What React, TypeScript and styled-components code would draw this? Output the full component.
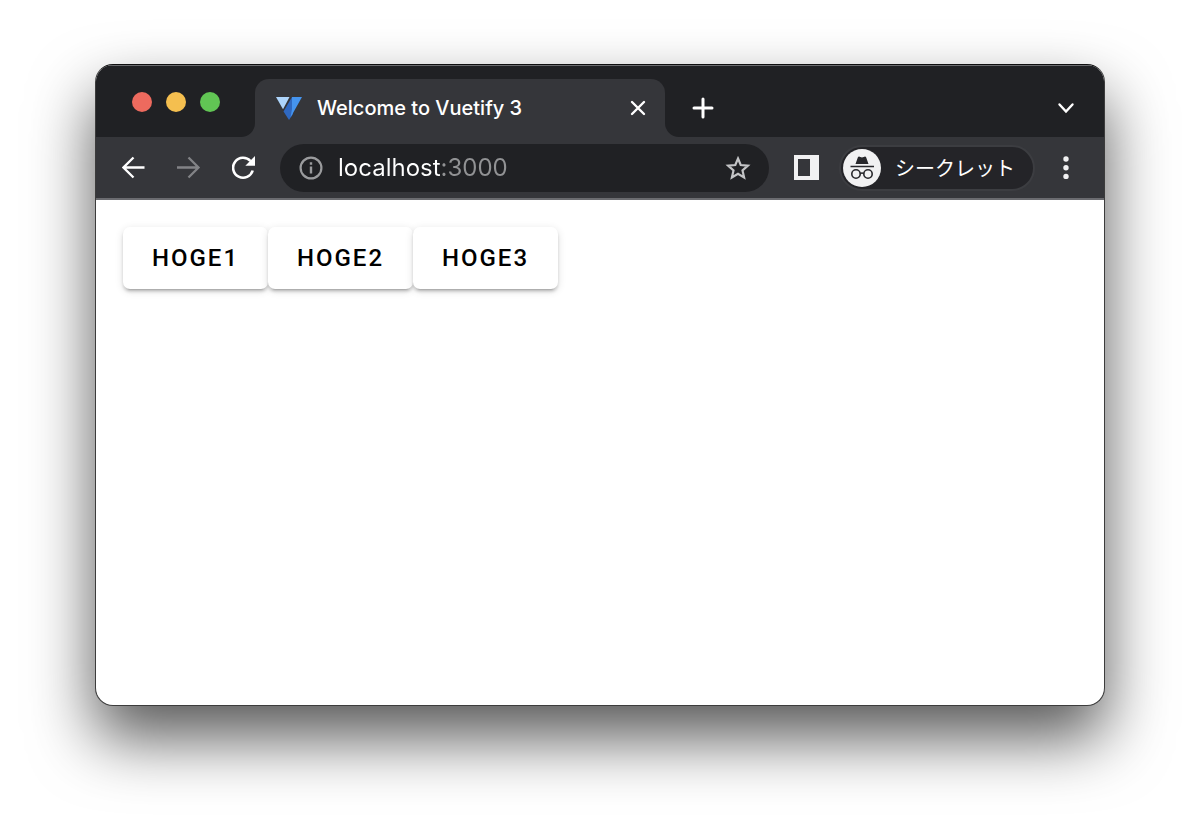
import React from "react";
import styled, { createGlobalStyle } from "styled-components";

const GlobalStyle = createGlobalStyle`
  *, *::before, *::after { box-sizing: border-box; }
  body { margin: 0; background: #fff; }
  button, input { font: inherit; color: inherit; margin: 0; }
  svg { display: block; }
`;

const ui = `Inter, "Liberation Sans", "Noto Sans CJK JP", sans-serif`;
const dark = "#202124";
const grey = "#35363a";

const Desktop = styled.div`
  min-height: 100vh;
  display: flex;
  padding: 64px 95px 126px;
  font-family: ${ui};
`;

const BrowserWindow = styled.section`
  flex: 1;
  min-width: 0;
  display: flex;
  flex-direction: column;
  border: 1px solid #3c3c3c;
  border-top-color: #0e0e0f;
  border-radius: 18px;
  overflow: hidden;
  background: #fff;
  box-shadow: 0 32px 64px rgba(0, 0, 0, 0.66);
`;

const TabStrip = styled.header`
  display: flex;
  height: 72px;
  background: ${grey};
  color: #fff;
  border-radius: 17px 17px 0 0;
  overflow: hidden;
`;

const TrafficLights = styled.div`
  flex: 0 0 159px;
  display: flex;
  gap: 14px;
  padding: 26px 0 0 36px;
  background: ${dark};
  border-top: 1px solid #6a6b6e;
  border-radius: 0 0 14px 0;
`;

const Light = styled.button<{ $color: string }>`
  width: 20px;
  height: 20px;
  padding: 0;
  border: 0;
  border-radius: 50%;
  background: ${(p) => p.$color};
`;

const TabSlot = styled.div`
  flex: 0 1 410px;
  min-width: 0;
  display: flex;
  padding-top: 13px;
  background: linear-gradient(${dark} 50%, ${grey} 50%);
  border-top: 1px solid #6a6b6e;
`;

const Tab = styled.div`
  flex: 1;
  min-width: 0;
  display: flex;
  align-items: center;
  gap: 15px;
  padding: 0 15px 0 21px;
  background: ${grey};
  border-radius: 14px 14px 0 0;
`;

const TabTitle = styled.h1`
  flex: 1;
  margin: 0;
  overflow: hidden;
  white-space: nowrap;
  font-size: 20px;
  line-height: 28px;
  font-weight: 450;
`;

const StripRest = styled.div`
  flex: 1;
  display: flex;
  align-items: center;
  justify-content: space-between;
  padding: 12px 26px 0 26px;
  background: ${dark};
  border-top: 1px solid #6a6b6e;
  border-radius: 0 0 0 14px;
`;

const IconButton = styled.button`
  flex: none;
  padding: 0;
  border: 0;
  background: none;
`;

const Toolbar = styled.nav`
  display: flex;
  align-items: center;
  height: 63px;
  padding: 0 32px 0 26px;
  background: ${grey};
  border-bottom: 2px solid #6b6c70;
  color: #fff;
`;

const NavButtons = styled.div`
  display: flex;
  gap: 31px;
  margin-right: 24px;
`;

const AddressBar = styled.label`
  flex: 1;
  min-width: 0;
  display: flex;
  align-items: center;
  gap: 15px;
  height: 48px;
  padding: 0 18px 0 19px;
  border-radius: 24px;
  background: ${dark};
`;

const AddressInput = styled.input`
  flex: 1;
  min-width: 0;
  height: 32px;
  padding: 0;
  border: 0;
  outline: 0;
  font-size: 24px;
  line-height: 32px;
  font-weight: 400;
  color: transparent;
  caret-color: #fff;
  background: linear-gradient(to right, #fff 103px, #919294 103px);
  background-clip: text;
`;

const PanelButton = styled(IconButton)`
  margin: 0 20px 0 25px;
`;

const Profile = styled.button`
  flex: none;
  display: flex;
  align-items: center;
  gap: 14px;
  height: 46px;
  margin-right: 25px;
  padding: 0 18px 0 2px;
  border: 2px solid #3c3d41;
  border-radius: 23px;
  background: #242428;
  font-family: "Noto Sans CJK JP", sans-serif;
  font-size: 20px;
  line-height: 28px;
  font-weight: 400;
`;

const Page = styled.main`
  flex: 1;
  padding: 27px;
`;

const ButtonRow = styled.div`
  display: flex;
`;

const RaisedButton = styled.button`
  width: 145px;
  height: 62px;
  padding: 0;
  border: 0;
  border-radius: 7px;
  background: #fff;
  color: #000;
  font-family: Roboto, sans-serif;
  font-size: 24px;
  line-height: 32px;
  font-weight: 500;
  letter-spacing: 2px;
  box-shadow:
    0 5px 2px -4px rgba(0, 0, 0, 0.2),
    0 3px 3px 0 rgba(0, 0, 0, 0.14),
    0 2px 8px 0 rgba(0, 0, 0, 0.12);
`;

const VuetifyLogo = () => (
  <svg width="26" height="23" viewBox="0 0 26 23" aria-hidden="true">
    <path d="M0 0H13.5L7 12.3Z" fill="#aed5fb" />
    <path d="M16 0H17V17L13 23L7.5 14.5Z" fill="#2f68c0" />
    <path d="M16 0H26L14.5 20.5L16 12Z" fill="#4594ee" />
  </svg>
);

const CloseIcon = () => (
  <svg width="24" height="24" viewBox="0 0 24 24" fill="none" stroke="#fff" strokeWidth="2.4" strokeLinecap="round">
    <path d="M6 6L18 18M18 6L6 18" />
  </svg>
);

const PlusIcon = () => (
  <svg width="24" height="24" viewBox="0 0 24 24" fill="none" stroke="#fff" strokeWidth="3" strokeLinecap="round">
    <path d="M12 3V21M3 12H21" />
  </svg>
);

const ChevronIcon = () => (
  <svg width="24" height="24" viewBox="0 0 24 24" fill="none" stroke="#fff" strokeWidth="2.4" strokeLinecap="round">
    <path d="M5.5 8.5L12 15.5L18.5 8.5" />
  </svg>
);

const ArrowIcon = ({ flip = false, color }: { flip?: boolean; color: string }) => (
  <svg width="24" height="24" viewBox="0 0 24 24" fill="none" stroke={color} strokeWidth="2.3">
    <path d={flip ? "M0 11.5H21.5M11.5 1.5L21.5 11.5L11.5 21.5" : "M22.5 11.5H1.5M11.5 1.5L1.5 11.5L11.5 21.5"} />
  </svg>
);

const ReloadIcon = () => (
  <svg width="24" height="24" viewBox="0 0 24 24">
    <path d="M18.5 5A10 10 0 1 0 20.7 14.5" fill="none" stroke="#fff" strokeWidth="2.6" />
    <path d="M23 0V9.7H13.3Z" fill="#fff" />
  </svg>
);

const InfoIcon = () => (
  <svg width="24" height="24" viewBox="0 0 24 24" aria-hidden="true">
    <circle cx="12" cy="12" r="10.4" fill="none" stroke="#9a9b9d" strokeWidth="2.2" />
    <path d="M10.8 10.5H13.2V17.5H10.8ZM10.8 6.3H13.2V8.8H10.8Z" fill="#9a9b9d" />
  </svg>
);

const StarIcon = () => (
  <svg width="26" height="26" viewBox="0 0 26 26" fill="none" stroke="#c3c4c6" strokeWidth="2.2">
    <path d="M13 3.5L15.7 10L22.9 10.7L17.5 15.4L19.1 22.4L13 18.7L6.9 22.4L8.5 15.4L3.1 10.7L10.3 10Z" />
  </svg>
);

const PanelIcon = () => (
  <svg width="25" height="25" viewBox="0 0 25 25">
    <path fillRule="evenodd" d="M0 0H25V25H0ZM4 4V21H16V4Z" fill="#f1f1f2" />
  </svg>
);

const IncognitoIcon = () => (
  <svg width="38" height="38" viewBox="0 0 38 38" aria-hidden="true">
    <circle cx="19" cy="19" r="19" fill="#f1f1f2" />
    <path d="M12.5 15L14.8 8.5Q15.4 7.3 16.6 7.7L19 8.4L21.4 7.7Q22.7 7.3 23.2 8.5L25.5 15Z" fill="#27272b" />
    <path d="M7.5 17.5H31" stroke="#27272b" strokeWidth="1.6" />
    <g fill="none" stroke="#27272b" strokeWidth="1.6">
      <circle cx="13" cy="25" r="4.2" />
      <circle cx="25" cy="25" r="4.2" />
      <path d="M17 24.7Q19 23.3 21 24.7" />
    </g>
  </svg>
);

const MenuIcon = () => (
  <svg width="12" height="24" viewBox="0 0 12 24" fill="#f1f1f2">
    <circle cx="6" cy="3" r="2.7" />
    <circle cx="6" cy="11.7" r="2.7" />
    <circle cx="6" cy="20.4" r="2.7" />
  </svg>
);

const lights = [
  { name: "Close window", color: "#ed6a5e" },
  { name: "Minimize window", color: "#f5bf4f" },
  { name: "Zoom window", color: "#61c554" },
];

const labels = ["HOGE1", "HOGE2", "HOGE3"];

export default function App() {
  return (
    <>
      <GlobalStyle />
      <Desktop>
        <BrowserWindow>
          <TabStrip>
            <TrafficLights>
              {lights.map((l) => (
                <Light key={l.name} $color={l.color} aria-label={l.name} />
              ))}
            </TrafficLights>
            <TabSlot>
              <Tab>
                <VuetifyLogo />
                <TabTitle>Welcome to Vuetify 3</TabTitle>
                <IconButton aria-label="Close tab"><CloseIcon /></IconButton>
              </Tab>
            </TabSlot>
            <StripRest>
              <IconButton aria-label="New tab"><PlusIcon /></IconButton>
              <IconButton aria-label="Search tabs"><ChevronIcon /></IconButton>
            </StripRest>
          </TabStrip>
          <Toolbar>
            <NavButtons>
              <IconButton aria-label="Back"><ArrowIcon color="#fff" /></IconButton>
              <IconButton aria-label="Forward"><ArrowIcon flip color="#828386" /></IconButton>
              <IconButton aria-label="Reload"><ReloadIcon /></IconButton>
            </NavButtons>
            <AddressBar>
              <InfoIcon />
              <AddressInput aria-label="Address" defaultValue="localhost:3000" />
              <IconButton aria-label="Bookmark this page"><StarIcon /></IconButton>
            </AddressBar>
            <PanelButton aria-label="Side panel"><PanelIcon /></PanelButton>
            <Profile>
              <IncognitoIcon />
              シークレット
            </Profile>
            <IconButton aria-label="Menu"><MenuIcon /></IconButton>
          </Toolbar>
          <Page>
            <ButtonRow>
              {labels.map((label) => (
                <RaisedButton key={label}>{label}</RaisedButton>
              ))}
            </ButtonRow>
          </Page>
        </BrowserWindow>
      </Desktop>
    </>
  );
}
